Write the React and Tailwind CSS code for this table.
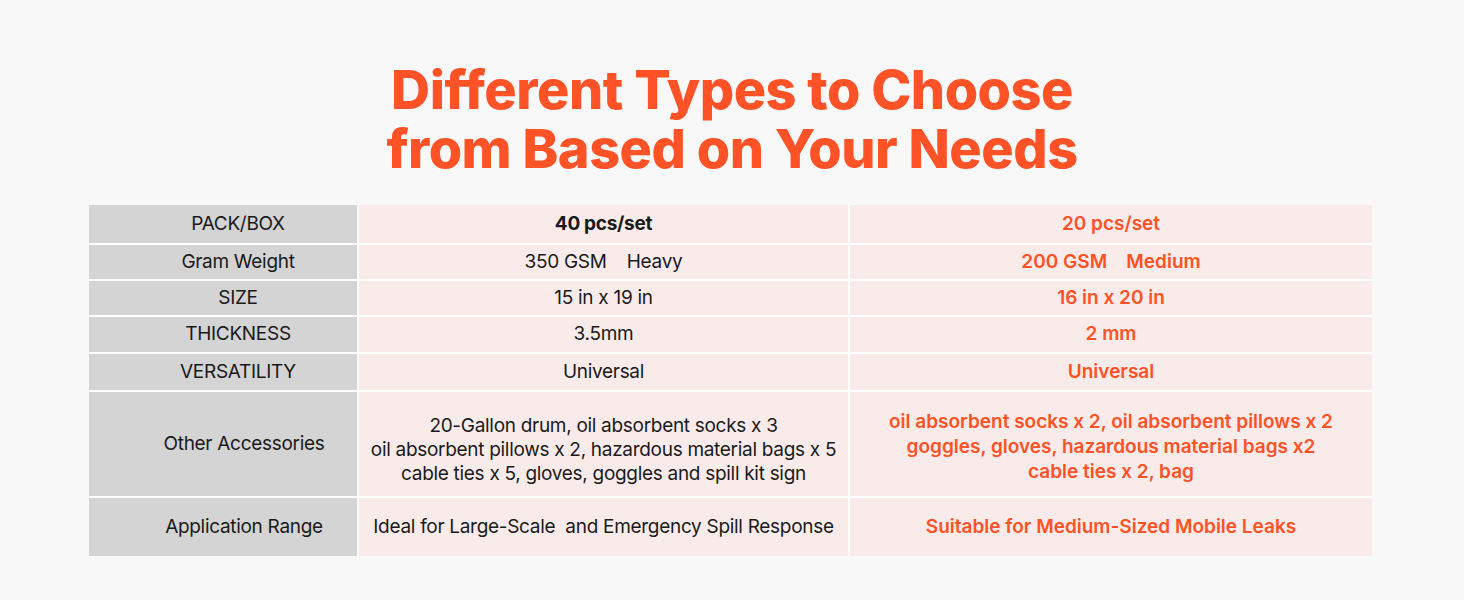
import React from "react";

const rows = [
  { label: "PACK/BOX", a: "40 pcs/set", aBold: true, b: "20 pcs/set", h: "h-[38px]" },
  { label: "Gram Weight", a: "350 GSM\u00a0\u00a0\u00a0\u00a0Heavy", b: "200 GSM\u00a0\u00a0\u00a0\u00a0Medium", h: "h-[34px]" },
  { label: "SIZE", a: "15 in x 19 in", b: "16 in x 20 in", h: "h-[34px]" },
  { label: "THICKNESS", a: "3.5mm", b: "2 mm", h: "h-[35px]" },
  { label: "VERSATILITY", a: "Universal", b: "Universal", h: "h-[36px]" },
  {
    label: "Other Accessories",
    a: [
      "20-Gallon drum, oil absorbent socks x 3",
      "oil absorbent pillows x 2, hazardous material bags x 5",
      "cable ties x 5, gloves, goggles and spill kit sign",
    ],
    b: [
      "oil absorbent socks x 2, oil absorbent pillows x 2",
      "goggles, gloves, hazardous material bags x2",
      "cable ties x 2, bag",
    ],
    h: "h-[104px]",
    lp: "pl-[42px]",
    ap: "pt-[12px]",
    bp: "pt-[4px]",
  },
  {
    label: "Application Range",
    a: "Ideal for Large-Scale\u00a0 and Emergency Spill Response",
    b: "Suitable for Medium-Sized Mobile Leaks",
    h: "h-[58px]",
    lp: "pl-[42px]",
  },
];

function Lines({ v, lh }) {
  if (Array.isArray(v)) {
    return (
      <div className={`flex flex-col items-center ${lh}`}>
        {v.map((l, i) => (
          <span key={i}>{l}</span>
        ))}
      </div>
    );
  }
  return <span>{v}</span>;
}

export default function App() {
  return (
    <div
      className="w-[1464px] h-[600px] bg-[#f8f8f8] overflow-hidden"
      style={{ fontFamily: "Inter, 'Noto Sans', sans-serif" }}
    >
      <h1 className="pt-[60px] text-center text-[54px] leading-[59px] font-extrabold text-[#ff5226] tracking-[-0.5px]">
        Different Types to Choose
        <br />
        from Based on Your Needs
      </h1>
      <div className="mt-[27px] ml-[89px] w-[1283px] grid grid-cols-[268px_489px_522px] gap-[2px] bg-white text-[19px]">
        {rows.map((r, i) => (
          <React.Fragment key={i}>
            <div
              className={`${r.h} bg-[#d4d4d4] flex items-center justify-center ${r.lp || "pl-[30px]"} text-[#1a1a1a] tracking-[-0.3px]`}
            >
              {r.label}
            </div>
            <div
              className={`${r.h} ${r.ap || ""} bg-[#f8ebea] flex items-center justify-center text-center text-[#1a1a1a] tracking-[-0.3px] ${r.aBold ? "font-bold" : ""}`}
            >
              <Lines v={r.a} lh="leading-[24px]" />
            </div>
            <div
              className={`${r.h} ${r.bp || ""} bg-[#f8ebea] flex items-center justify-center text-center font-semibold text-[#ff5226]`}
            >
              <Lines v={r.b} lh="leading-[25px]" />
            </div>
          </React.Fragment>
        ))}
      </div>
    </div>
  );
}
